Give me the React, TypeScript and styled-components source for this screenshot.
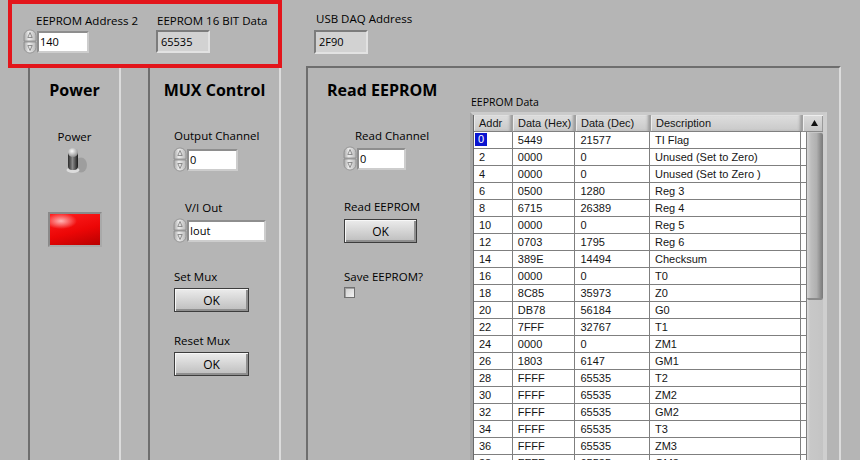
import React from "react";
import styled, { createGlobalStyle } from "styled-components";

// ------------------------------------------------
// Style
// ------------------------------------------------

const GlobalStyle = createGlobalStyle`
  html, body {
    margin: 0;
    padding: 0;
    background: #b5b5b5;
    overflow: hidden;
  }
`;

const Page = styled.div`
  width: 860px;
  height: 460px;
  overflow: hidden;
  background: #b5b5b5;
  font-family: "Open Sans", sans-serif;
  color: #000;
`;

const TopRow = styled.div`
  display: flex;
  height: 66px;
  padding-left: 8px;
`;

const RedFrame = styled.div`
  position: relative;
  z-index: 1;
  box-sizing: border-box;
  width: 274px;
  height: 68px;
  border: 4px solid #e3151b;
  display: flex;
  padding-left: 11px;
`;

const Field = styled.div<{ $ml?: number; $w?: number }>`
  display: flex;
  flex-direction: column;
  align-items: flex-start;
  flex: none;
  margin-left: ${(p) => p.$ml ?? 0}px;
  width: ${(p) => (p.$w ? `${p.$w}px` : "auto")};
`;

const Label = styled.div<{ $ml?: number; $mt?: number }>`
  font-size: 11.5px;
  line-height: 15px;
  white-space: nowrap;
  margin-left: ${(p) => p.$ml ?? 0}px;
  margin-top: ${(p) => p.$mt ?? 0}px;
`;

const ControlRow = styled.div<{ $ml?: number; $mt?: number }>`
  display: flex;
  align-items: center;
  margin-left: ${(p) => p.$ml ?? 0}px;
  margin-top: ${(p) => p.$mt ?? 0}px;
`;

const EntryBox = styled.div<{ $w: number }>`
  box-sizing: border-box;
  width: ${(p) => p.$w}px;
  height: 22px;
  background: #fff;
  border: 2px solid;
  border-color: #8e8e8e #cdcdcd #cdcdcd #8e8e8e;
  font-size: 11px;
  line-height: 18px;
  padding-left: 1px;
`;

const Indicator = styled.div<{ $w: number; $h: number; $mt?: number }>`
  box-sizing: border-box;
  width: ${(p) => p.$w}px;
  height: ${(p) => p.$h}px;
  margin-top: ${(p) => p.$mt ?? 0}px;
  background: #d2d2d2;
  border: 2px solid;
  border-color: #7c7c7c #e2e2e2 #e2e2e2 #7c7c7c;
  font-size: 11px;
  line-height: ${(p) => p.$h - 4}px;
  padding-left: 3px;
`;

const PanelRow = styled.div`
  display: flex;
  padding-left: 28px;
  height: 420px;
`;

const Panel = styled.div<{ $w: number; $ml?: number; $center?: boolean }>`
  box-sizing: border-box;
  flex: none;
  width: ${(p) => p.$w}px;
  margin-left: ${(p) => p.$ml ?? 0}px;
  border-top: 2px solid #6e6e6e;
  border-left: 2px solid #6e6e6e;
  border-right: 2px solid #dcdcdc;
  display: flex;
  flex-direction: column;
  align-items: ${(p) => (p.$center ? "center" : "flex-start")};
`;

const ReadPanel = styled(Panel)`
  flex-direction: row;
`;

const Column = styled.div<{ $w?: number }>`
  display: flex;
  flex-direction: column;
  align-items: flex-start;
  flex: none;
  width: ${(p) => (p.$w ? `${p.$w}px` : "auto")};
`;

const Title = styled.div<{ $ml?: number; $center?: boolean }>`
  font-weight: 700;
  font-size: 16px;
  line-height: 20px;
  margin-top: 12px;
  margin-left: ${(p) => p.$ml ?? 0}px;
  align-self: ${(p) => (p.$center ? "center" : "flex-start")};
  white-space: nowrap;
`;

const ToggleWrap = styled.div`
  margin-top: 3px;
  margin-left: 3px;
  height: 27px;
`;

const Led = styled.div`
  box-sizing: border-box;
  width: 54px;
  height: 35px;
  margin-top: 38px;
  margin-left: 1px;
  border: 2px solid;
  border-color: #8a8a8a #a9a9a9 #a9a9a9 #8a8a8a;
  background: radial-gradient(
      ellipse 16px 8px at 11px 7px,
      rgba(255, 190, 190, 0.95) 0%,
      rgba(255, 60, 60, 0) 100%
    ),
    linear-gradient(165deg, #ff2020 0%, #ec0606 55%, #b80000 100%);
`;

const OkButton = styled.div<{ $w: number; $ml?: number; $mt?: number }>`
  box-sizing: border-box;
  width: ${(p) => p.$w}px;
  height: 24px;
  margin-left: ${(p) => p.$ml ?? 0}px;
  margin-top: ${(p) => p.$mt ?? 0}px;
  border: 1px solid #3d3d3d;
  background: linear-gradient(#ececec, #d2d2d2 55%, #bdbdbd);
  box-shadow: inset 1px 1px 0 #f7f7f7, inset -2px -2px 0 #8f8f8f;
  display: flex;
  align-items: center;
  justify-content: center;
  font-size: 12px;
`;

const CheckBox = styled.div<{ $ml?: number; $mt?: number }>`
  box-sizing: border-box;
  width: 11px;
  height: 11px;
  margin-left: ${(p) => p.$ml ?? 0}px;
  margin-top: ${(p) => p.$mt ?? 0}px;
  border: 1px solid #707070;
  background: linear-gradient(135deg, #cdcdcd, #f2f2f2);
  box-shadow: inset 1px 1px 0 #a0a0a0;
`;

const TableLabel = styled.div`
  font-size: 10.5px;
  line-height: 13px;
  margin-top: 28px;
  margin-left: 1px;
  white-space: nowrap;
`;

const TableFrame = styled.div`
  box-sizing: border-box;
  margin-top: 3px;
  width: 357px;
  height: 400px;
  border-style: solid;
  border-width: 3px 4px 0 3px;
  border-color: #cbcbcb #cfcfcf #a5a5a5 #a5a5a5;
  display: flex;
  flex-direction: column;
`;

const Grid = styled.div`
  display: flex;
  flex-direction: column;
  border-left: 1px solid #6a6a6a;
  font-family: "Liberation Sans", Arial, sans-serif;
  font-size: 11px;
  color: #151515;
  height: 100%;
`;

const HeaderRow = styled.div`
  display: flex;
  height: 17px;
  flex: none;
`;

const HeaderCell = styled.div<{ $w: number }>`
  box-sizing: border-box;
  width: ${(p) => p.$w}px;
  height: 17px;
  padding-left: 5px;
  line-height: 16px;
  background: linear-gradient(#dedede, #c9c9c9);
  border-bottom: 1px solid #808080;
  border-right: 1px solid #a0a0a0;
  box-shadow: inset -3px 0 3px -1px #999, inset 1px 1px 0 #ececec;
  white-space: nowrap;
  overflow: hidden;
`;

const UpCell = styled.div`
  box-sizing: border-box;
  width: 20px;
  height: 17px;
  background: linear-gradient(#dcdcdc, #c6c6c6);
  border-bottom: 1px solid #8a8a8a;
  box-shadow: inset 1px 1px 0 #eeeeee, inset -1px 0 0 #9a9a9a;
  display: flex;
  align-items: center;
  justify-content: center;
  padding-left: 2px;
`;

const Body = styled.div`
  display: flex;
  flex: 1;
  overflow: hidden;
`;

const Rows = styled.div`
  width: 333px;
  flex: none;
  display: flex;
  flex-direction: column;
`;

const Row = styled.div`
  box-sizing: border-box;
  display: flex;
  flex: none;
  height: 17px;
  background: #fff;
  border-bottom: 1px solid #7f7f7f;
`;

const Cell = styled.div<{ $w: number }>`
  box-sizing: border-box;
  width: ${(p) => p.$w}px;
  padding-left: 5px;
  line-height: 16px;
  border-right: 1px solid #7f7f7f;
  white-space: nowrap;
  overflow: hidden;
`;

const Selected = styled.span`
  display: inline-block;
  margin-left: -4px;
  padding: 0 3px;
  height: 13px;
  line-height: 13px;
  margin-top: 1px;
  vertical-align: top;
  background: #0a14d0;
  color: #fff;
`;

const Track = styled.div`
  width: 16px;
  flex: none;
  display: flex;
  flex-direction: column;
  background: linear-gradient(to right, #dedede 0, #c8c8c8 3px, #c4c4c4 100%);
`;

const Thumb = styled.div`
  box-sizing: border-box;
  height: 167px;
  margin-top: 1px;
  border-radius: 2px;
  border-bottom: 2px solid #8a8a8a;
  background: linear-gradient(
    to right,
    #d6d6d6 0,
    #bdbdbd 25%,
    #b0b0b0 60%,
    #8c8c8c 85%,
    #7a7a7a 100%
  );
`;

// ------------------------------------------------
// Parts
// ------------------------------------------------

const Spinner = () => (
  <svg width="14" height="25" viewBox="0 0 14 25">
    <defs>
      <linearGradient id="spinFill" x1="0" x2="1" y1="0" y2="0">
        <stop offset="0" stopColor="#a8a8a8" />
        <stop offset="0.4" stopColor="#ededed" />
        <stop offset="1" stopColor="#b8b8b8" />
      </linearGradient>
    </defs>
    <path
      d="M1 12 V6.5 a6 5.5 0 0 1 12 0 V12 Z"
      fill="url(#spinFill)"
      stroke="#8b8b8b"
      strokeWidth="0.8"
    />
    <path
      d="M1 13 V18.5 a6 5.5 0 0 0 12 0 V13 Z"
      fill="url(#spinFill)"
      stroke="#8b8b8b"
      strokeWidth="0.8"
    />
    <path d="M7 3.5 L4.8 8.5 H9.2 Z" fill="none" stroke="#6a6a6a" strokeWidth="0.7" />
    <path d="M7 21.5 L4.8 16.5 H9.2 Z" fill="none" stroke="#6a6a6a" strokeWidth="0.7" />
  </svg>
);

const ToggleSwitch = () => (
  <svg width="24" height="27" viewBox="0 0 24 27">
    <defs>
      <linearGradient id="tgLever" x1="0" x2="1" y1="0" y2="0">
        <stop offset="0" stopColor="#2a2a2a" />
        <stop offset="0.45" stopColor="#8a8a8a" />
        <stop offset="1" stopColor="#1c1c1c" />
      </linearGradient>
      <radialGradient id="tgKnob" cx="0.4" cy="0.35" r="0.7">
        <stop offset="0" stopColor="#fafafa" />
        <stop offset="1" stopColor="#8a8a8a" />
      </radialGradient>
    </defs>
    <ellipse cx="17" cy="18" rx="6" ry="7.5" fill="#8a8a8a" opacity="0.55" />
    <ellipse cx="9" cy="23" rx="6.5" ry="3" fill="#dcdcdc" />
    <rect x="4" y="4" width="10" height="19" rx="4" fill="url(#tgLever)" />
    <ellipse cx="9" cy="5.5" rx="5" ry="4.5" fill="url(#tgKnob)" />
  </svg>
);

const UpArrow = () => (
  <svg width="7" height="6" viewBox="0 0 7 6">
    <path d="M3.5 0 L7 6 H0 Z" fill="#111" />
  </svg>
);

// ------------------------------------------------
// Data
// ------------------------------------------------

const COLS = [39, 63, 75, 152];

const ROWS: [string, string, string, string][] = [
  ["0", "5449", "21577", "TI Flag"],
  ["2", "0000", "0", "Unused (Set to Zero)"],
  ["4", "0000", "0", "Unused (Set to Zero )"],
  ["6", "0500", "1280", "Reg 3"],
  ["8", "6715", "26389", "Reg 4"],
  ["10", "0000", "0", "Reg 5"],
  ["12", "0703", "1795", "Reg 6"],
  ["14", "389E", "14494", "Checksum"],
  ["16", "0000", "0", "T0"],
  ["18", "8C85", "35973", "Z0"],
  ["20", "DB78", "56184", "G0"],
  ["22", "7FFF", "32767", "T1"],
  ["24", "0000", "0", "ZM1"],
  ["26", "1803", "6147", "GM1"],
  ["28", "FFFF", "65535", "T2"],
  ["30", "FFFF", "65535", "ZM2"],
  ["32", "FFFF", "65535", "GM2"],
  ["34", "FFFF", "65535", "T3"],
  ["36", "FFFF", "65535", "ZM3"],
  ["38", "FFFF", "65535", "GM3"],
];

// ------------------------------------------------
// View
// ------------------------------------------------

const App = () => {
  return (
    <Page>
      <GlobalStyle />
      <TopRow>
        <RedFrame>
          <Field $w={133}>
            <Label $ml={13} $mt={9}>
              EEPROM Address 2
            </Label>
            <ControlRow $mt={1}>
              <Spinner />
              <EntryBox $w={52}>140</EntryBox>
            </ControlRow>
          </Field>
          <Field>
            <Label $ml={1} $mt={9}>
              EEPROM 16 BIT Data
            </Label>
            <Indicator $w={54} $h={23} $mt={2}>
              65535
            </Indicator>
          </Field>
        </RedFrame>
        <Field $ml={32}>
          <Label $ml={2} $mt={11}>
            USB DAQ Address
          </Label>
          <Indicator $w={54} $h={24} $mt={4}>
            2F90
          </Indicator>
        </Field>
      </TopRow>

      <PanelRow>
        <Panel $w={93} $center>
          <Title $center>Power</Title>
          <Label $mt={29}>Power</Label>
          <ToggleWrap>
            <ToggleSwitch />
          </ToggleWrap>
          <Led />
        </Panel>

        <Panel $w={133} $ml={27}>
          <Title $center>MUX Control</Title>
          <Label $ml={24} $mt={28}>
            Output Channel
          </Label>
          <ControlRow $ml={23} $mt={4}>
            <Spinner />
            <EntryBox $w={51}>0</EntryBox>
          </ControlRow>
          <Label $ml={35} $mt={28}>
            V/I Out
          </Label>
          <ControlRow $ml={23} $mt={3}>
            <Spinner />
            <EntryBox $w={79}>Iout</EntryBox>
          </ControlRow>
          <Label $ml={24} $mt={26}>
            Set Mux
          </Label>
          <OkButton $w={75} $ml={24} $mt={4}>
            OK
          </OkButton>
          <Label $ml={24} $mt={21}>
            Reset Mux
          </Label>
          <OkButton $w={75} $ml={24} $mt={4}>
            OK
          </OkButton>
        </Panel>

        <ReadPanel $w={535} $ml={25}>
          <Column $w={162}>
            <Title $ml={19}>Read EEPROM</Title>
            <Label $ml={47} $mt={28}>
              Read Channel
            </Label>
            <ControlRow $ml={35} $mt={3}>
              <Spinner />
              <EntryBox $w={49}>0</EntryBox>
            </ControlRow>
            <Label $ml={36} $mt={28}>
              Read EEPROM
            </Label>
            <OkButton $w={73} $ml={36} $mt={5}>
              OK
            </OkButton>
            <Label $ml={36} $mt={26}>
              Save EEPROM?
            </Label>
            <CheckBox $ml={36} $mt={3} />
          </Column>

          <Column>
            <TableLabel>EEPROM Data</TableLabel>
            <TableFrame>
              <Grid>
                <HeaderRow>
                  <HeaderCell $w={COLS[0]}>Addr</HeaderCell>
                  <HeaderCell $w={COLS[1]}>Data (Hex)</HeaderCell>
                  <HeaderCell $w={COLS[2]}>Data (Dec)</HeaderCell>
                  <HeaderCell $w={COLS[3]}>Description</HeaderCell>
                  <UpCell>
                    <UpArrow />
                  </UpCell>
                </HeaderRow>
                <Body>
                  <Rows>
                    {ROWS.map((r, i) => (
                      <Row key={r[0]}>
                        <Cell $w={COLS[0]}>
                          {i === 0 ? <Selected>{r[0]}</Selected> : r[0]}
                        </Cell>
                        <Cell $w={COLS[1]}>{r[1]}</Cell>
                        <Cell $w={COLS[2]}>{r[2]}</Cell>
                        <Cell $w={COLS[3]}>{r[3]}</Cell>
                        <Cell $w={4} />
                      </Row>
                    ))}
                  </Rows>
                  <Track>
                    <Thumb />
                  </Track>
                </Body>
              </Grid>
            </TableFrame>
          </Column>
        </ReadPanel>
      </PanelRow>
    </Page>
  );
};

export default App;
